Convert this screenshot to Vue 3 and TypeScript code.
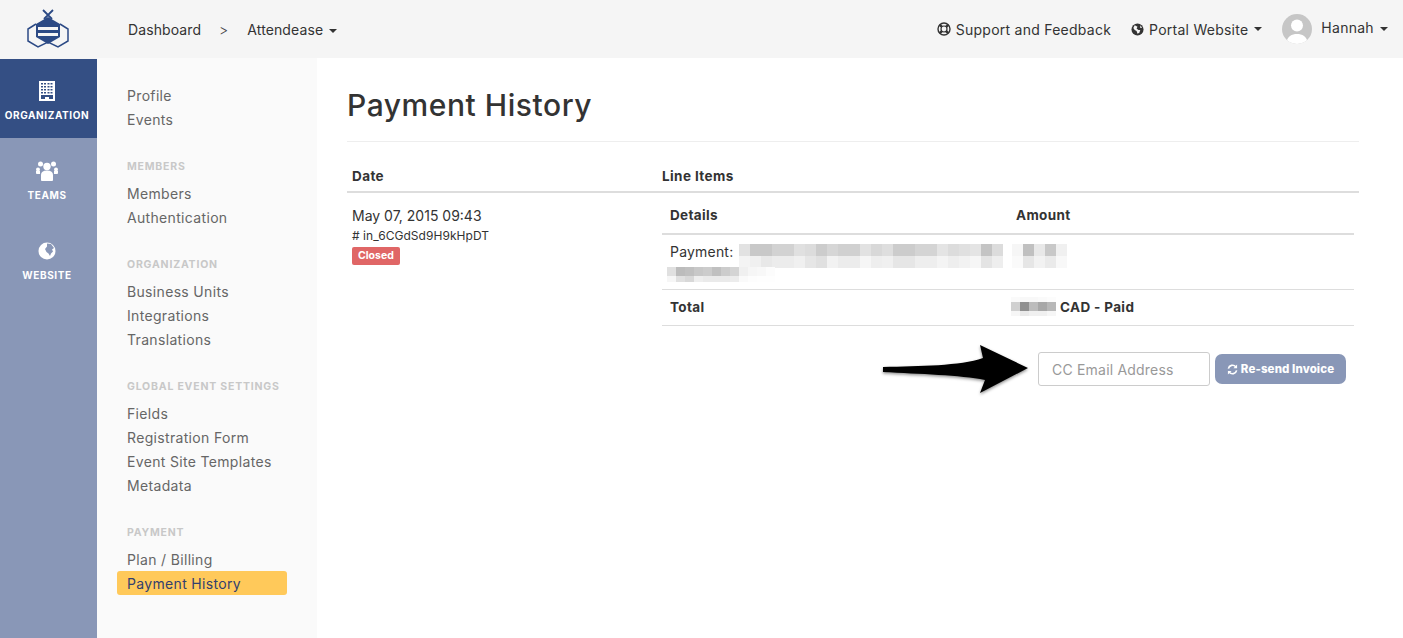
<script setup lang="ts">
const railItems = [
  { label: 'ORGANIZATION', icon: 'building', active: true },
  { label: 'TEAMS', icon: 'users', active: false },
  { label: 'WEBSITE', icon: 'globe', active: false },
]

const menu = [
  { title: '', links: ['Profile', 'Events'] },
  { title: 'MEMBERS', links: ['Members', 'Authentication'] },
  { title: 'ORGANIZATION', links: ['Business Units', 'Integrations', 'Translations'] },
  { title: 'GLOBAL EVENT SETTINGS', links: ['Fields', 'Registration Form', 'Event Site Templates', 'Metadata'] },
  { title: 'PAYMENT', links: ['Plan / Billing', 'Payment History'] },
]

// pixelated (redacted) text, one grey per cell
const shades = (s: string) => s.split(' ').map((v) => '#' + v + v + v)
const blurOne = [
  shades('e2 c8 c8 d2 d2 e0 dc cc d6 d0 d0 e2 d8 de cc cc d4 d4 e4 dc e0 e4 c4 dc'),
  shades('f4 f0 e8 ec ec f0 e6 e0 f2 ec ec f6 ee f0 e6 e6 ee ee f4 ee f2 f6 e4 ee'),
]
const blurTwo = [
  shades('e0 bc c0 c8 cc c0 cc d4 f0 f6 f8 fc'),
  shades('f6 e0 d8 ee ea ea ea ec fa fd fe fe'),
]
const blurAmount = [shades('f6 c0 e8 c8 f0'), shades('fa e6 f2 ea f8')]
const blurTotal = [shades('fa f8 f8 fa fc'), shades('d0 90 bc a8 b8'), shades('f6 ea f0 f0 f6')]
</script>

<template>
  <div class="page">
    <header class="topbar">
      <div class="logo">
        <svg width="44" height="40" viewBox="26 9 44 40" fill="none">
          <path d="M43 10l9 9M53 10l-9 9" stroke="#2c4a85" stroke-width="1.800" />
          <path d="M36 24l-8 5v12l10 6 10-5 10 5 10-6V29l-8-5" stroke="#2c4a85" stroke-width="1.500" />
          <path d="M48 17l12 7v13l-12 7-12-7V24z" fill="#2c4a85" />
          <rect x="38" y="27" width="20" height="3" fill="#f5f5f5" />
          <rect x="38" y="33" width="20" height="3" fill="#f5f5f5" />
        </svg>
      </div>
      <nav class="crumbs">
        <a>Dashboard</a>
        <span class="sep">&gt;</span>
        <a>Attendease <i class="caret"></i></a>
      </nav>
      <div class="top-right">
        <a class="top-link">
          <svg width="14" height="14" viewBox="0 0 14 14" fill="none" stroke="#333">
            <circle cx="7" cy="7" r="6" stroke-width="1.400" />
            <circle cx="7" cy="7" r="3" stroke-width="1.200" />
            <path d="M2.800 2.800l2.100 2.100M11.200 2.800L9.100 4.900M2.800 11.200l2.100-2.100M11.200 11.200L9.100 9.100" stroke-width="2.400" />
          </svg>
          Support and Feedback
        </a>
        <a class="top-link">
          <svg width="13" height="13" viewBox="0 0 14 14">
            <circle cx="7" cy="7" r="6.500" fill="#333" />
            <path d="M4 2.500l3 1.500-1 2 2 1.500 2 0-1 3-2 1-1-3-2-1-1.500-2zM10 2.500l2 2.500-2 .5z" fill="#f5f5f5" />
          </svg>
          Portal Website <i class="caret"></i>
        </a>
        <a class="user">
          <span class="avatar">
            <svg width="30" height="30" viewBox="0 0 30 30">
              <circle cx="15" cy="11.500" r="6" fill="#fff" />
              <path d="M4 30c1-8 6-10 11-10s10 2 11 10z" fill="#fff" />
            </svg>
          </span>
          <span class="user-name">Hannah <i class="caret"></i></span>
        </a>
      </div>
    </header>

    <div class="body">
      <aside class="rail">
        <a v-for="item in railItems" :key="item.label" class="rail-item" :class="{ active: item.active }">
          <svg v-if="item.icon === 'building'" width="18" height="22" viewBox="0 0 18 22">
            <path fill-rule="evenodd" fill="#fff" d="M1 1h16v20H1zM3 3v1.500h2V3zm3 0v1.500h2V3zm3.500 0v1.500h2V3zm3 0v1.500h2V3zM3 6v1.500h2V6zm3 0v1.500h2V6zm3.500 0v1.500h2V6zm3 0v1.500h2V6zM3 9v1.500h2V9zm3 0v1.500h2V9zm3.500 0v1.500h2V9zm3 0v1.500h2V9zM3 12v1.500h2V12zm3 0v1.500h2V12zm3.500 0v1.500h2V12zm3 0v1.500h2V12zM3 15v4h4v-2h4v2h4v-4z" />
          </svg>
          <svg v-else-if="item.icon === 'users'" width="22" height="20" viewBox="0 0 22 20" fill="#fff">
            <circle cx="4.500" cy="3" r="2.500" />
            <circle cx="17.500" cy="3" r="2.500" />
            <circle cx="11" cy="5.500" r="3.700" />
            <circle cx="2" cy="8.500" r="2" />
            <circle cx="20" cy="8.500" r="2" />
            <path d="M5 14c0-3 2-4.500 6-4.500s6 1.500 6 4.500v5c0 .5-.5 1-1 1H6c-.5 0-1-.5-1-1zM0 10h4v3H1c-.5 0-1-.5-1-1zM22 10h-4v3h3c.5 0 1-.5 1-1z" />
          </svg>
          <svg v-else width="18" height="18" viewBox="0 0 18 18">
            <circle cx="9" cy="9" r="8.500" fill="#fff" />
            <path d="M9 1.500l4 .5 3 4-2 1.500 1 2-2 2-1 2.500-1.500-2.500-2-1.500L7 7l2-2.500z" fill="#8997b7" />
          </svg>
          <span>{{ item.label }}</span>
        </a>
      </aside>

      <nav class="side">
        <div v-for="group in menu" :key="group.links[0]" class="side-group">
          <h5 v-if="group.title">{{ group.title }}</h5>
          <a v-for="link in group.links" :key="link" class="side-link" :class="{ current: link === 'Payment History' }">{{ link }}</a>
        </div>
      </nav>

      <main class="content">
        <h1>Payment History</h1>
        <div class="cols head">
          <div class="col-date">Date</div>
          <div class="col-items">Line Items</div>
        </div>
        <div class="cols">
          <div class="col-date">
            <div class="date">May 07, 2015 09:43</div>
            <div class="invoice"># in_6CGdSd9H9kHpDT</div>
            <span class="badge">Closed</span>
          </div>
          <div class="col-items">
            <div class="inner-row inner-head">
              <div class="cell-l">Details</div>
              <div class="cell-r">Amount</div>
            </div>
            <div class="inner-row payment">
              <div class="cell-l">
                <div class="pay-line">
                  Payment:
                  <span class="pixels first">
                    <span v-for="(row, r) in blurOne" :key="r" class="px-row">
                      <i v-for="(c, i) in row" :key="i" :style="{ background: c }"></i>
                    </span>
                  </span>
                </div>
                <span class="pixels second">
                  <span v-for="(row, r) in blurTwo" :key="r" class="px-row">
                    <i v-for="(c, i) in row" :key="i" :style="{ background: c }"></i>
                  </span>
                </span>
              </div>
              <div class="cell-r">
                <span class="pixels amount">
                  <span v-for="(row, r) in blurAmount" :key="r" class="px-row">
                    <i v-for="(c, i) in row" :key="i" :style="{ background: c }"></i>
                  </span>
                </span>
              </div>
            </div>
            <div class="inner-row total">
              <div class="cell-l">Total</div>
              <div class="cell-r total-val">
                <span class="pixels small">
                  <span v-for="(row, r) in blurTotal" :key="r" class="px-row">
                    <i v-for="(c, i) in row" :key="i" :style="{ background: c }"></i>
                  </span>
                </span>
                CAD - Paid
              </div>
            </div>
            <div class="resend">
              <svg class="arrow" width="150" height="56" viewBox="0 0 150 56">
                <defs>
                  <filter id="arrow-shadow" x="-10%" y="-20%" width="120%" height="150%">
                    <feDropShadow dx="0" dy="1.500" stdDeviation="1.500" flood-color="#000" flood-opacity="0.45" />
                  </filter>
                </defs>
                <path d="M3 26C40 25 80 25 103 17L100 4l48 23-48 25 5-13C80 34 40 33 3 31z" fill="#000" filter="url(#arrow-shadow)" />
              </svg>
              <input class="cc" type="text" placeholder="CC Email Address" />
              <button class="send">
                <svg width="11" height="11" viewBox="0 0 12 12" fill="none" stroke="#fff" stroke-width="1.800">
                  <path d="M1.500 5a4.600 4.600 0 0 1 8-2l1 1M10.500 7a4.600 4.600 0 0 1-8 2l-1-1" />
                  <path d="M11 .5v4H7M1 11.500v-4h4" fill="#fff" stroke="none" />
                </svg>
                Re-send Invoice
              </button>
            </div>
          </div>
        </div>
      </main>
    </div>
  </div>
</template>

<style scoped>
.page {
  width: 1403px;
  height: 638px;
  overflow: hidden;
  display: flex;
  flex-direction: column;
  font-family: Inter, 'Open Sans', sans-serif;
  font-size: 14px;
  color: #333;
  background: #fff;
}

.topbar {
  height: 58px;
  background: #f5f5f5;
  display: flex;
  align-items: center;
  flex-shrink: 0;
}
.logo {
  width: 97px;
  height: 58px;
  display: flex;
  align-items: center;
  justify-content: center;
  padding-right: 1px;
  box-sizing: border-box;
}
.crumbs {
  margin-left: 31px;
  display: flex;
  align-items: center;
  gap: 18px;
  letter-spacing: 0.1px;
}
.sep {
  font-size: 14px;
  font-weight: 300;
  color: #444;
  margin-right: 1px;
}
.caret {
  display: inline-block;
  width: 0;
  height: 0;
  margin-left: 2px;
  vertical-align: middle;
  border-top: 4px solid #333;
  border-left: 4px solid transparent;
  border-right: 4px solid transparent;
}
.top-right {
  margin-left: auto;
  display: flex;
  align-items: center;
  padding-right: 15px;
  letter-spacing: 0.25px;
}
.top-link {
  display: flex;
  align-items: center;
  gap: 5px;
  margin-right: 20px;
}
.top-link .caret {
  margin-left: 1px;
}
.user {
  display: flex;
  align-items: center;
  gap: 9px;
}
.user-name {
  position: relative;
  top: -2px;
}
.avatar {
  width: 30px;
  height: 30px;
  border-radius: 50%;
  background: #c6c6c6;
  overflow: hidden;
  display: block;
}
.avatar svg {
  display: block;
}

.body {
  flex: 1;
  display: flex;
  min-height: 0;
}
.rail {
  width: 97px;
  background: #8997b7;
  flex-shrink: 0;
  border-top: 1px solid #f5f5f5;
  box-sizing: border-box;
}
.rail-item {
  height: 80px;
  display: flex;
  flex-direction: column;
  align-items: center;
  padding: 22px 3px 0 0;
  box-sizing: border-box;
  gap: 7px;
  color: #fff;
  font-size: 10px;
  font-weight: 700;
  letter-spacing: 0.6px;
}
.rail-item span {
  line-height: 12px;
}
.rail-item svg {
  height: 22px;
}
.rail-item.active {
  background: #344f84;
  height: 79px;
  padding-top: 21px;
}

.side {
  width: 220px;
  background: #fafafa;
  flex-shrink: 0;
  padding: 25px 30px 0 20px;
  box-sizing: border-box;
}
.side-group {
  margin-bottom: 28px;
}
.side h5 {
  margin: 0 0 7px 10px;
  padding-top: 1px;
  font-size: 10.500px;
  line-height: 14px;
  font-weight: 700;
  letter-spacing: 0.8px;
  color: #c8c8c8;
}
.side-link {
  display: block;
  height: 24px;
  line-height: 25px;
  padding-left: 10px;
  color: #666;
  letter-spacing: 0.33px;
}
.side-link.current {
  background: #ffc95a;
  color: #33406e;
  border-radius: 3px;
}

.content {
  flex: 1;
  padding: 0 44px 0 30px;
  min-width: 0;
}
h1 {
  margin: 0;
  padding: 30px 0 19px;
  font-size: 30px;
  line-height: 34px;
  font-weight: 500;
  letter-spacing: 0.55px;
  color: #333;
  border-bottom: 1px solid #eee;
}
.cols {
  display: flex;
}
.head {
  margin-top: 24px;
  font-weight: 700;
  font-size: 13.500px;
  line-height: 20px;
  padding-bottom: 5px;
  letter-spacing: 0.4px;
  border-bottom: 2px solid #ddd;
}
.col-date {
  width: 315px;
  padding-left: 5px;
  box-sizing: border-box;
  flex-shrink: 0;
}
.col-items {
  flex: 1;
  min-width: 0;
}
.col-date .date {
  margin-top: 13px;
  line-height: 20px;
}
.invoice {
  margin-top: 1px;
  font-size: 12px;
  line-height: 18px;
  letter-spacing: 0.05px;
}
.badge {
  display: inline-block;
  padding: 0 6px;
  height: 18px;
  line-height: 18px;
  font-size: 10.500px;
  font-weight: 700;
  color: #fff;
  background: #e06666;
  border-radius: 2px;
}

.inner-row {
  display: flex;
  margin-right: 5px;
  border-bottom: 1px solid #ddd;
}
.cell-l {
  width: 354px;
  padding-left: 8px;
  box-sizing: border-box;
  flex-shrink: 0;
}
.inner-head {
  height: 42px;
  align-items: center;
  padding-top: 4px;
  box-sizing: border-box;
  font-weight: 700;
  font-size: 13.500px;
  letter-spacing: 0.35px;
  border-bottom-width: 2px;
}
.payment {
  height: 55px;
  box-sizing: border-box;
  padding-top: 7px;
}
.pay-line {
  display: flex;
  align-items: flex-start;
  gap: 6px;
  height: 20px;
  line-height: 20px;
  letter-spacing: 0.2px;
}
.total {
  height: 36px;
  box-sizing: border-box;
  padding-bottom: 2px;
  align-items: center;
  font-weight: 700;
  font-size: 13.500px;
  letter-spacing: 0.35px;
}
.total-val {
  display: flex;
  align-items: center;
  gap: 4px;
}

.pixels {
  display: inline-flex;
  flex-direction: column;
}
.px-row {
  display: flex;
  height: 12px;
}
.px-row i {
  display: block;
  width: 11px;
}
.first {
  margin-top: 2px;
}
.second {
  margin: 4px 0 0 -3px;
}
.second .px-row:first-child {
  height: 9px;
}
.second .px-row:last-child {
  height: 6px;
}
.second .px-row i,
.small .px-row i {
  width: 9px;
}
.amount {
  margin: 2px 0 0 -4px;
}
.small {
  margin-left: -5px;
}
.small .px-row {
  height: 5px;
}
.small .px-row:nth-child(2) {
  height: 9px;
}

.resend {
  display: flex;
  align-items: center;
  justify-content: flex-end;
  margin-top: 15px;
  padding-right: 13px;
  gap: 5px;
}
.arrow {
  margin-right: 3px;
}
.cc {
  width: 172px;
  height: 34px;
  box-sizing: border-box;
  border: 1px solid #ccc;
  border-radius: 3px;
  padding: 0 13px;
  font: inherit;
  letter-spacing: 0.2px;
  background: #fff;
  outline: none;
}
.cc::placeholder {
  color: #999;
  opacity: 1;
}
.send {
  width: 131px;
  height: 30px;
  border: 0;
  border-radius: 7px;
  background: #8997b7;
  color: #fff;
  font-family: inherit;
  font-size: 11.500px;
  font-weight: 800;
  letter-spacing: 0.1px;
  display: flex;
  align-items: center;
  justify-content: center;
  gap: 3px;
  padding: 0;
}
</style>

<style>
html,
body {
  margin: 0;
  background: #fff;
}
</style>
